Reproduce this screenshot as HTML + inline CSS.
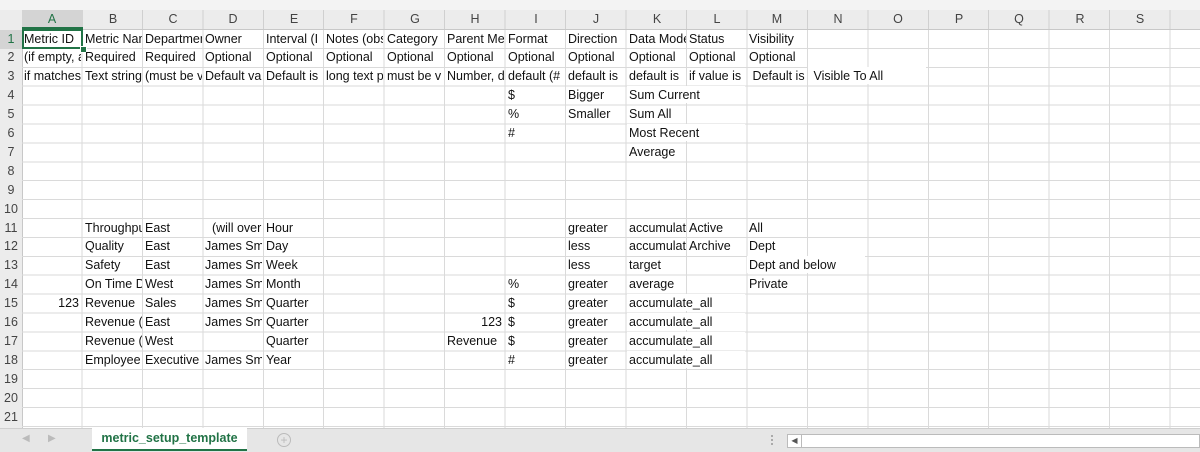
<!DOCTYPE html><html><head><style>
body{margin:0;width:1200px;height:451px;overflow:hidden;background:#fff;font-family:"Liberation Sans",Arial,sans-serif;font-size:12.5px;color:#111;position:relative}
.top{position:absolute;left:0;top:0;width:1200px;height:10px;background:#f3f3f3}
.hdr{position:absolute;left:0;top:10px;width:1200px;height:19px;background:#ececec;border-bottom:1px solid #c8c8c8}
.hcol{position:absolute;left:22px;top:10px;width:1178px;height:19px;background-image:repeating-linear-gradient(to right,transparent 0,transparent 59.45px,#d0d0d0 59.45px,#d0d0d0 60.45px)}
.rh{position:absolute;left:0;top:29px;width:22px;height:399px;background:#ececec;border-right:1px solid #c8c8c8}
.grid{position:absolute;left:22px;top:29.5px;width:1178px;height:398px;
background-image:repeating-linear-gradient(to bottom,transparent 0,transparent 17.9px,#dadada 17.9px,#dadada 18.9px),repeating-linear-gradient(to right,transparent 0,transparent 59.45px,#dadada 59.45px,#dadada 60.45px)}
.h{position:absolute;top:10px;height:19px;line-height:19px;text-align:center;color:#444;font-size:12.5px;width:60px}
.n{position:absolute;left:0;width:22px;text-align:center;color:#444;font-size:12.5px;height:19px;line-height:19px}
.c{position:absolute;overflow:hidden;white-space:nowrap;height:17px;line-height:19px;padding-left:2px;width:57px}
.w{background:#fff;width:116px}
.r{text-align:right;padding-left:0;padding-right:2px}
.tab{position:absolute;top:428px;left:0;width:1200px;height:23px;background:#e6e6e6;border-top:1px solid #cfcfcf}
</style></head><body>
<div class="top"></div><div class="hdr"></div><div class="hcol"></div><div class="rh"></div><div class="grid"></div>
<div style="position:absolute;left:22px;top:10px;width:61px;height:19px;background:#d4d4d4;border-bottom:2px solid #217346;box-sizing:border-box"></div>
<div style="position:absolute;left:0;top:29.5px;width:22px;height:19px;background:#d4d4d4"></div>
<div style="position:absolute;left:22px;top:29px;width:61px;height:20px;border:2px solid #217346;box-sizing:border-box"></div>
<div style="position:absolute;left:80px;top:46px;width:5px;height:5px;background:#217346;border:1px solid #fff"></div>
<div class="h" style="left:22px;color:#217346">A</div><div class="h" style="left:83px">B</div><div class="h" style="left:143px">C</div><div class="h" style="left:203px">D</div><div class="h" style="left:264px">E</div><div class="h" style="left:324px">F</div><div class="h" style="left:385px">G</div><div class="h" style="left:445px">H</div><div class="h" style="left:506px">I</div><div class="h" style="left:566px">J</div><div class="h" style="left:627px">K</div><div class="h" style="left:687px">L</div><div class="h" style="left:747px">M</div><div class="h" style="left:808px">N</div><div class="h" style="left:868px">O</div><div class="h" style="left:929px">P</div><div class="h" style="left:989px">Q</div><div class="h" style="left:1050px">R</div><div class="h" style="left:1110px">S</div>
<div class="n" style="top:29.5px;color:#217346">1</div><div class="n" style="top:48.4px">2</div><div class="n" style="top:67.3px">3</div><div class="n" style="top:86.2px">4</div><div class="n" style="top:105.1px">5</div><div class="n" style="top:124px">6</div><div class="n" style="top:142.9px">7</div><div class="n" style="top:161.8px">8</div><div class="n" style="top:180.7px">9</div><div class="n" style="top:199.6px">10</div><div class="n" style="top:218.5px">11</div><div class="n" style="top:237.4px">12</div><div class="n" style="top:256.3px">13</div><div class="n" style="top:275.2px">14</div><div class="n" style="top:294.1px">15</div><div class="n" style="top:313px">16</div><div class="n" style="top:331.9px">17</div><div class="n" style="top:350.8px">18</div><div class="n" style="top:369.7px">19</div><div class="n" style="top:388.6px">20</div><div class="n" style="top:407.5px">21</div>

<div class="c" style="left:22px;top:29.5px">Metric ID</div><div class="c" style="left:83px;top:29.5px">Metric Name</div><div class="c" style="left:143px;top:29.5px">Department</div><div class="c" style="left:203px;top:29.5px">Owner</div><div class="c" style="left:264px;top:29.5px">Interval (I</div><div class="c" style="left:324px;top:29.5px">Notes (obs</div><div class="c" style="left:385px;top:29.5px">Category</div><div class="c" style="left:445px;top:29.5px">Parent Metric</div><div class="c" style="left:506px;top:29.5px">Format</div><div class="c" style="left:566px;top:29.5px">Direction</div><div class="c" style="left:627px;top:29.5px">Data Model</div><div class="c" style="left:687px;top:29.5px">Status</div><div class="c" style="left:747px;top:29.5px">Visibility</div>
<div class="c" style="left:22px;top:48.4px">(if empty, a</div><div class="c" style="left:83px;top:48.4px">Required</div><div class="c" style="left:143px;top:48.4px">Required</div><div class="c" style="left:203px;top:48.4px">Optional</div><div class="c" style="left:264px;top:48.4px">Optional</div><div class="c" style="left:324px;top:48.4px">Optional</div><div class="c" style="left:385px;top:48.4px">Optional</div><div class="c" style="left:445px;top:48.4px">Optional</div><div class="c" style="left:506px;top:48.4px">Optional</div><div class="c" style="left:566px;top:48.4px">Optional</div><div class="c" style="left:627px;top:48.4px">Optional</div><div class="c" style="left:687px;top:48.4px">Optional</div><div class="c" style="left:747px;top:48.4px">Optional</div>
<div class="c" style="left:22px;top:67.3px">if matches</div><div class="c" style="left:83px;top:67.3px">Text string</div><div class="c" style="left:143px;top:67.3px">(must be v</div><div class="c" style="left:203px;top:67.3px">Default value</div><div class="c" style="left:264px;top:67.3px">Default is</div><div class="c" style="left:324px;top:67.3px">long text p</div><div class="c" style="left:385px;top:67.3px">must be v</div><div class="c" style="left:445px;top:67.3px">Number, d</div><div class="c" style="left:506px;top:67.3px">default (#</div><div class="c" style="left:566px;top:67.3px">default is</div><div class="c" style="left:627px;top:67.3px">default is</div><div class="c" style="left:687px;top:67.3px">if value is</div><div class="c" style="left:747px;top:67.3px">&nbsp;Default is</div><div class="c w" style="left:808px;top:67.3px">&nbsp;Visible To All</div>
<div class="c" style="left:506px;top:86.2px">$</div><div class="c" style="left:566px;top:86.2px">Bigger</div><div class="c w" style="left:627px;top:86.2px">Sum Current</div>
<div class="c" style="left:506px;top:105.1px">%</div><div class="c" style="left:566px;top:105.1px">Smaller</div><div class="c" style="left:627px;top:105.1px">Sum All</div>
<div class="c" style="left:506px;top:124px">#</div><div class="c w" style="left:627px;top:124px">Most Recent</div>
<div class="c" style="left:627px;top:142.9px">Average</div>
<div class="c" style="left:83px;top:218.5px">Throughput</div><div class="c" style="left:143px;top:218.5px">East</div><div class="c" style="left:203px;top:218.5px">&nbsp; (will over</div><div class="c" style="left:264px;top:218.5px">Hour</div><div class="c" style="left:566px;top:218.5px">greater</div><div class="c" style="left:627px;top:218.5px">accumulate</div><div class="c" style="left:687px;top:218.5px">Active</div><div class="c" style="left:747px;top:218.5px">All</div>
<div class="c" style="left:83px;top:237.4px">Quality</div><div class="c" style="left:143px;top:237.4px">East</div><div class="c" style="left:203px;top:237.4px">James Smith</div><div class="c" style="left:264px;top:237.4px">Day</div><div class="c" style="left:566px;top:237.4px">less</div><div class="c" style="left:627px;top:237.4px">accumulate</div><div class="c" style="left:687px;top:237.4px">Archive</div><div class="c" style="left:747px;top:237.4px">Dept</div>
<div class="c" style="left:83px;top:256.3px">Safety</div><div class="c" style="left:143px;top:256.3px">East</div><div class="c" style="left:203px;top:256.3px">James Smith</div><div class="c" style="left:264px;top:256.3px">Week</div><div class="c" style="left:566px;top:256.3px">less</div><div class="c" style="left:627px;top:256.3px">target</div><div class="c w" style="left:747px;top:256.3px">Dept and below</div>
<div class="c" style="left:83px;top:275.2px">On Time De</div><div class="c" style="left:143px;top:275.2px">West</div><div class="c" style="left:203px;top:275.2px">James Smith</div><div class="c" style="left:264px;top:275.2px">Month</div><div class="c" style="left:506px;top:275.2px">%</div><div class="c" style="left:566px;top:275.2px">greater</div><div class="c" style="left:627px;top:275.2px">average</div><div class="c" style="left:747px;top:275.2px">Private</div>
<div class="c r" style="left:22px;top:294.1px">123</div><div class="c" style="left:83px;top:294.1px">Revenue</div><div class="c" style="left:143px;top:294.1px">Sales</div><div class="c" style="left:203px;top:294.1px">James Smith</div><div class="c" style="left:264px;top:294.1px">Quarter</div><div class="c" style="left:506px;top:294.1px">$</div><div class="c" style="left:566px;top:294.1px">greater</div><div class="c w" style="left:627px;top:294.1px">accumulate_all</div>
<div class="c" style="left:83px;top:313px">Revenue (E</div><div class="c" style="left:143px;top:313px">East</div><div class="c" style="left:203px;top:313px">James Smith</div><div class="c" style="left:264px;top:313px">Quarter</div><div class="c r" style="left:445px;top:313px">123</div><div class="c" style="left:506px;top:313px">$</div><div class="c" style="left:566px;top:313px">greater</div><div class="c w" style="left:627px;top:313px">accumulate_all</div>
<div class="c" style="left:83px;top:331.9px">Revenue (W</div><div class="c" style="left:143px;top:331.9px">West</div><div class="c" style="left:264px;top:331.9px">Quarter</div><div class="c" style="left:445px;top:331.9px">Revenue</div><div class="c" style="left:506px;top:331.9px">$</div><div class="c" style="left:566px;top:331.9px">greater</div><div class="c w" style="left:627px;top:331.9px">accumulate_all</div>
<div class="c" style="left:83px;top:350.8px">Employee</div><div class="c" style="left:143px;top:350.8px">Executive</div><div class="c" style="left:203px;top:350.8px">James Smith</div><div class="c" style="left:264px;top:350.8px">Year</div><div class="c" style="left:506px;top:350.8px">#</div><div class="c" style="left:566px;top:350.8px">greater</div><div class="c w" style="left:627px;top:350.8px">accumulate_all</div>

<div class="tab">
<div style="position:absolute;left:22px;top:4px;color:#bbb;font-size:10px">&#9664;</div>
<div style="position:absolute;left:48px;top:4px;color:#bbb;font-size:10px">&#9654;</div>
<div style="position:absolute;left:92px;top:-1px;width:155px;height:23px;background:#fff;border-bottom:2px solid #217346;box-sizing:border-box;text-align:center;line-height:21px;color:#217346;font-weight:bold;font-size:12.5px">metric_setup_template</div>
<div style="position:absolute;left:277px;top:4px;width:12px;height:12px;border:1px solid #bbb;border-radius:50%;color:#bbb;text-align:center;line-height:12px;font-size:12px">+</div>
<div style="position:absolute;left:771px;top:6px;width:2px;height:10px;border-left:2px dotted #aaa"></div>
<div style="position:absolute;left:787px;top:5px;width:413px;height:14px;background:#fff;border:1px solid #bbb;box-sizing:border-box"></div>
<div style="position:absolute;left:788px;top:6px;width:13px;height:12px;border-right:1px solid #bbb;color:#555;font-size:8px;text-align:center;line-height:12px">&#9664;</div>
</div>
</body></html>
